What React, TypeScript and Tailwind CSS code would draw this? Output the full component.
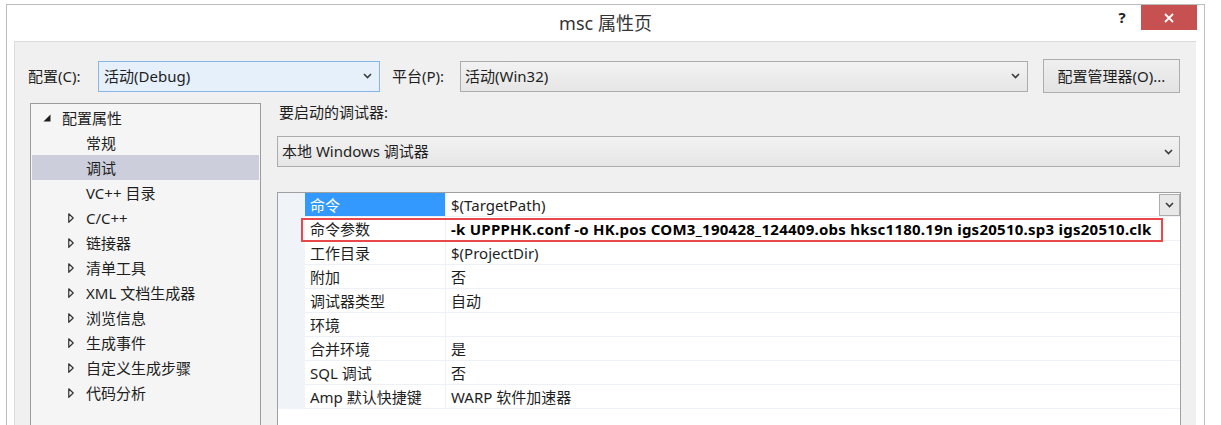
import React from "react";

function Chevron({ className = "" }: { className?: string }) {
  return (
    <svg width="9" height="6" viewBox="0 0 9 6" className={className}>
      <path d="M1 1 L4.5 4.5 L8 1" stroke="#3c3c3c" strokeWidth="1.6" fill="none" />
    </svg>
  );
}

function FilledTri() {
  return (
    <svg width="8" height="8" viewBox="0 0 8 8">
      <path d="M7.5 0.5 L7.5 7.5 L0.5 7.5 Z" fill="#1e1e1e" />
    </svg>
  );
}

function OutlineTri() {
  return (
    <svg width="6" height="10" viewBox="0 0 6 10">
      <path d="M0.75 0.75 L5.2 5 L0.75 9.25 Z" stroke="#333" strokeWidth="1.2" fill="none" strokeLinejoin="round" />
    </svg>
  );
}

type TreeItem = { label: string; level: 0 | 1; expandable?: boolean; selected?: boolean };

const tree: TreeItem[] = [
  { label: "配置属性", level: 0 },
  { label: "常规", level: 1 },
  { label: "调试", level: 1, selected: true },
  { label: "VC++ 目录", level: 1 },
  { label: "C/C++", level: 1, expandable: true },
  { label: "链接器", level: 1, expandable: true },
  { label: "清单工具", level: 1, expandable: true },
  { label: "XML 文档生成器", level: 1, expandable: true },
  { label: "浏览信息", level: 1, expandable: true },
  { label: "生成事件", level: 1, expandable: true },
  { label: "自定义生成步骤", level: 1, expandable: true },
  { label: "代码分析", level: 1, expandable: true },
];

const rows: { name: string; value: string; bold?: boolean; selected?: boolean }[] = [
  { name: "命令", value: "$(TargetPath)", selected: true },
  {
    name: "命令参数",
    value: "-k UPPPHK.conf -o HK.pos COM3_190428_124409.obs hksc1180.19n igs20510.sp3 igs20510.clk",
    bold: true,
  },
  { name: "工作目录", value: "$(ProjectDir)" },
  { name: "附加", value: "否" },
  { name: "调试器类型", value: "自动" },
  { name: "环境", value: "" },
  { name: "合并环境", value: "是" },
  { name: "SQL 调试", value: "否" },
  { name: "Amp 默认快捷键", value: "WARP 软件加速器" },
];

export default function App() {
  return (
    <div className="w-[1221px] h-[425px] overflow-hidden bg-white pl-[6px] pt-[4px] font-['Noto_Sans','Noto_Sans_CJK_SC',sans-serif] text-[15px] text-[#1e1e1e]">
      <div className="w-[1199px] h-[430px] border-l border-t border-r border-[#bdbdbd] bg-white flex flex-col">
        {/* title bar */}
        <div className="h-[36px] grid grid-cols-[1fr_auto_1fr] shrink-0">
          <div />
          <div className="text-[18px] leading-[36px] text-[#333]">msc 属性页</div>
          <div className="flex justify-end items-start pr-[7px]">
            <div className="w-[28px] h-[25px] flex items-center justify-center text-[15px] font-bold text-[#222] mr-[5px]">?</div>
            <div className="w-[56px] h-[25px] bg-[#c75050] flex items-center justify-center">
              <svg width="10" height="10" viewBox="0 0 10 10">
                <path d="M1 1 L9 9 M9 1 L1 9" stroke="white" strokeWidth="1.8" />
              </svg>
            </div>
          </div>
        </div>

        {/* content */}
        <div className="ml-[7px] mr-[8px] flex-1 bg-[#f0f0f0] border-l border-t border-[#dadada] flex flex-col">
          {/* row 1 */}
          <div className="flex items-center pl-[13px] pt-[17px] h-[51px]">
            <div className="w-[70px] leading-[20px]">配置(C):</div>
            <div className="w-[282px] h-[31px] border border-[#86b6e6] bg-[#e6f0fa] flex items-center justify-between pl-[5px] pr-[7px]">
              <span>活动(Debug)</span>
              <Chevron />
            </div>
            <div className="w-[68px] ml-[12px] leading-[20px]">平台(P):</div>
            <div className="w-[568px] h-[31px] border border-[#acacac] bg-gradient-to-b from-[#f2f2f2] to-[#e6e6e6] flex items-center justify-between pl-[4px] pr-[7px]">
              <span>活动(Win32)</span>
              <Chevron />
            </div>
            <div className="w-[137px] h-[34px] ml-[15px] border border-[#adadad] bg-gradient-to-b from-[#efefef] to-[#e3e3e3] flex items-center justify-center">
              配置管理器(O)...
            </div>
          </div>

          {/* body */}
          <div className="flex pl-[15px] mt-[10px] flex-1">
            {/* tree */}
            <div className="w-[231px] h-[340px] border border-[#9c9c9c] bg-[#f5f5f5] px-[1px] pt-[1px] shrink-0">
              {tree.map((t) => (
                <div
                  key={t.label}
                  className={`h-[25px] flex items-center ${t.selected ? "bg-[#cccedb]" : ""} ${t.level === 0 ? "pl-[11px]" : "pl-[36px]"}`}
                >
                  {t.level === 0 ? (
                    <span className="w-[19px] flex items-center">
                      <FilledTri />
                    </span>
                  ) : (
                    <span className="w-[18px] flex items-center">{t.expandable ? <OutlineTri /> : null}</span>
                  )}
                  <span className="leading-[20px] whitespace-nowrap">{t.label}</span>
                </div>
              ))}
            </div>

            {/* right column */}
            <div className="w-[904px] ml-[16px] flex flex-col">
              <div className="leading-[18px] pl-[2px]">要启动的调试器:</div>
              <div className="mt-[15px] w-[903px] h-[31px] border border-[#acacac] bg-gradient-to-b from-[#f2f2f2] to-[#e6e6e6] flex items-center justify-between pl-[4px] pr-[6px]">
                <span>本地 Windows 调试器</span>
                <Chevron />
              </div>

              {/* property grid */}
              <div className="mt-[25px] relative border-l border-t border-r border-[#a0a0a0] bg-white h-[300px]">
                {rows.map((r) => (
                  <div key={r.name} className="flex h-[24px]">
                    <div className="w-[27px] bg-[#f0f3f8] shrink-0" />
                    <div
                      className={`w-[141px] shrink-0 border-r border-b border-[#edf0f5] pl-[5px] pt-[2px] flex items-center whitespace-nowrap ${
                        r.selected ? "bg-[#3399ff] text-white" : ""
                      }`}
                    >
                      {r.name}
                    </div>
                    <div className="flex-1 border-b border-[#edf0f5] pl-[5px] flex items-center justify-between whitespace-nowrap">
                      <span className={`pt-[2px] ${r.bold ? "font-bold text-black tracking-[0.25px]" : ""}`}>{r.value}</span>
                      {r.selected ? (
                        <div className="w-[21px] h-[22px] border border-[#acacac] bg-[#e8e8e8] flex items-center justify-center">
                          <Chevron />
                        </div>
                      ) : null}
                    </div>
                  </div>
                ))}
                {/* red annotation box */}
                <div className="absolute left-[23px] top-[25px] w-[862px] h-[24px] border-2 border-[#e8474c] pointer-events-none" />
              </div>
            </div>
          </div>
        </div>
      </div>
    </div>
  );
}
